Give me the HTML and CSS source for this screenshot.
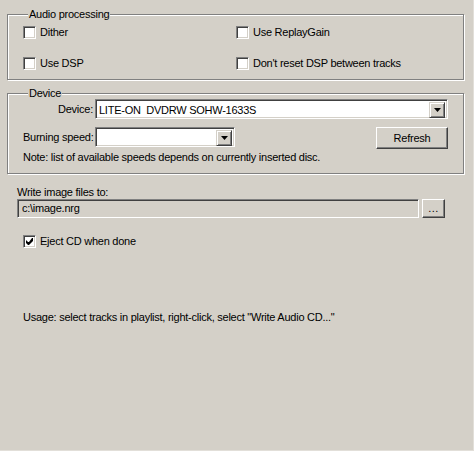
FILE: index.html
```html
<!DOCTYPE html>
<html lang="en">
  <head>
    <meta charset="UTF-8" />
    <title>Write Audio CD - Options</title>
    <link rel="stylesheet" href="styles.css">
  </head>
  <body>
    <div class="page">
      <!-- Audio processing -->
      <fieldset class="group audio">
        <legend>Audio processing</legend>
        <div class="opts">
          <label class="check"><span class="box"></span>Dither</label>
          <label class="check"><span class="box"></span>Use ReplayGain</label>
          <label class="check"><span class="box"></span>Use DSP</label>
          <label class="check"><span class="box"></span>Don't reset DSP between tracks</label>
        </div>
      </fieldset>

      <!-- Device -->
      <fieldset class="group device">
        <legend>Device</legend>
        <div class="dev-row">
          <span class="dev-label">Device:</span>
          <div class="combo wide">
            <span class="combo-text">LITE-ON&nbsp; DVDRW SOHW-1633S</span>
            <span class="drop">
              <svg width="7" height="4" viewBox="0 0 7 4"><polygon points="0,0 7,0 3.5,4" fill="#000"/></svg>
            </span>
          </div>
        </div>
        <div class="dev-row second">
          <span class="dev-label">Burning speed:</span>
          <div class="combo speed">
            <span class="combo-text"></span>
            <span class="drop">
              <svg width="7" height="4" viewBox="0 0 7 4"><polygon points="0,0 7,0 3.5,4" fill="#000"/></svg>
            </span>
          </div>
          <button class="btn refresh">Refresh</button>
        </div>
        <p class="note">Note: list of available speeds depends on currently inserted disc.</p>
      </fieldset>

      <p class="write-label">Write image files to:</p>
      <div class="path-row">
        <div class="edit">c:\image.nrg</div>
        <button class="btn browse">...</button>
      </div>

      <label class="check eject">
        <span class="box">
          <svg width="7" height="7" viewBox="0 0 7 7"><path d="M6 0h1v3L3 7H2L0 5V2l2 2h1z" fill="#000"/></svg>
        </span>Eject CD when done
      </label>

      <p class="usage">Usage: select tracks in playlist, right-click, select "Write Audio CD..."</p>
    </div>
  </body>
</html>
```

FILE: styles.css
```css
* {
  margin: 0;
  box-sizing: border-box;
}

body {
  background: #d4d0c8;
  font-family: "Liberation Sans", Arial, sans-serif;
  font-size: 11px;
  line-height: 13px;
  letter-spacing: -0.25px;
  color: #000;
}

.page {
  width: 474px;
  height: 451px;
  padding: 8px 0 0 7px;
  border-right: 1px solid #e2dfd9;
  border-bottom: 1px solid #e2dfd9;
  white-space: nowrap;
}

/* Group boxes (etched) */
.group {
  width: 457px;
  border: 1px solid #808080;
  box-shadow: 1px 1px 0 #fff, inset 1px 1px 0 #fff;
  padding: 0 15px 9px 15px;
}

.group legend {
  margin-left: 5px;
  padding: 0 1px;
  line-height: 12px;
  background: #d4d0c8;
}

.device {
  margin-top: 7px;
}

/* Checkboxes */
.opts {
  display: grid;
  grid-template-columns: 213px auto;
  row-gap: 18px;
  margin-top: 6px;
}

.check {
  display: flex;
  align-items: center;
  gap: 4px;
  height: 13px;
}

.box {
  width: 13px;
  height: 13px;
  flex: none;
  background: #fff;
  border: 1px solid;
  border-color: #808080 #fff #fff #808080;
  box-shadow: inset 1px 1px 0 #404040, inset -1px -1px 0 #d4d0c8;
  display: flex;
  align-items: center;
  justify-content: center;
}

/* Device rows */
.dev-row {
  display: flex;
  align-items: flex-start;
}

.dev-row.second {
  margin-top: 8px;
}

.dev-label {
  width: 70px;
  margin-right: 2px;
  text-align: right;
  line-height: 20px;
}

.combo {
  height: 20px;
  display: flex;
  background: #fff;
  border: 1px solid;
  border-color: #808080 #fff #fff #808080;
  box-shadow: inset 1px 1px 0 #404040, inset -1px -1px 0 #d4d0c8;
  padding: 2px;
}

.combo.wide {
  flex: 1;
}

.combo.speed {
  width: 140px;
}

.combo-text {
  flex: 1;
  line-height: 16px;
  padding-left: 1px;
}

.drop {
  width: 16px;
  height: 16px;
  background: #d4d0c8;
  border: 1px solid;
  border-color: #d4d0c8 #404040 #404040 #d4d0c8;
  box-shadow: inset 1px 1px 0 #fff, inset -1px -1px 0 #808080;
  display: flex;
  align-items: center;
  justify-content: center;
}

/* Buttons */
.btn {
  font: inherit;
  letter-spacing: inherit;
  color: #000;
  background: #d4d0c8;
  border: 1px solid;
  border-color: #fff #404040 #404040 #fff;
  box-shadow: inset -1px -1px 0 #808080, inset 1px 1px 0 #d4d0c8;
  padding: 0;
}

.refresh {
  margin-left: auto;
  width: 72px;
  height: 22px;
}

.note {
  margin-top: 2px;
}

/* Image path */
.write-label {
  margin: 12px 0 0 10px;
  line-height: 13px;
}

.path-row {
  display: flex;
  margin-left: 10px;
}

.edit {
  width: 402px;
  height: 19px;
  line-height: 15px;
  padding: 1px 4px;
  border: 1px solid;
  border-color: #808080 #fff #fff #808080;
  box-shadow: inset 1px 1px 0 #404040, inset -1px -1px 0 #d4d0c8;
}

.browse {
  width: 23px;
  height: 19px;
  line-height: 13px;
  margin-left: 3px;
  letter-spacing: 0.5px;
}

.eject {
  margin: 17px 0 0 16px;
}

.usage {
  margin: 63px 0 0 16px;
}
```
